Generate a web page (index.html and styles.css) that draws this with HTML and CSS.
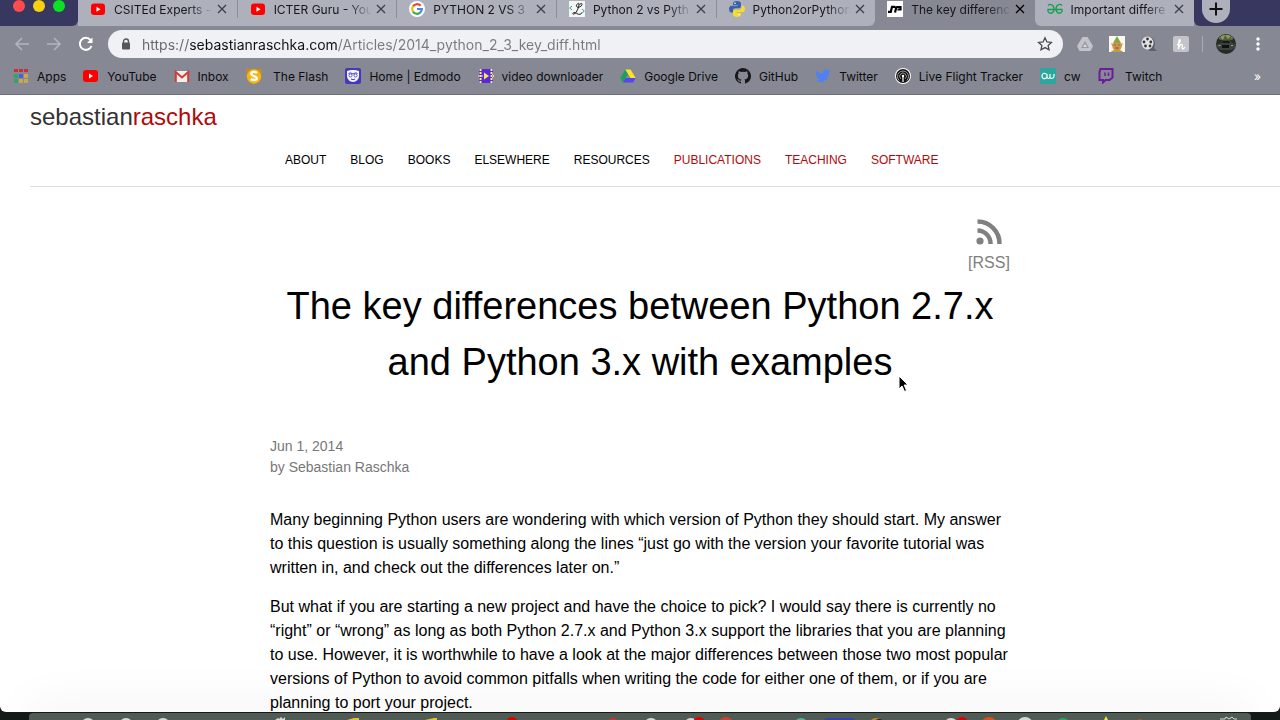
FILE: index.html
```html
<!DOCTYPE html>
<html lang="en">
    <head>
        <meta charset="utf-8">
        <title>The key differences between Python 2.7.x and Python 3.x with examples</title>
        <link rel="stylesheet" href="styles.css">
    </head>
    <body>
        <div class="browser">
            <div class="tabstrip">
                <div class="lights">
                    <button class="light close-light" aria-label="Close window"></button>
                    <button class="light min-light" aria-label="Minimize window"></button>
                    <button class="light max-light" aria-label="Zoom window"></button>
                </div>
                <div class="tab-group group-left">
                    <div class="tab">
                        <svg class="icon" viewBox="0 0 16 16"><rect x="1" y="2.500" width="14" height="11.500" rx="3" fill="#f00"/><path d="M6.500 5.800v5l4-2.500z" fill="#fff"/></svg>
                        <a class="tab-title" href="#">CSITEd Experts - </a>
                        <button class="tab-close" aria-label="Close tab"><svg viewBox="0 0 10 10"><path d="M1 1l8 8M9 1L1 9"/></svg></button>
                    </div>
                    <div class="tab">
                        <svg class="icon" viewBox="0 0 16 16"><rect x="1" y="2.500" width="14" height="11.500" rx="3" fill="#f00"/><path d="M6.500 5.800v5l4-2.500z" fill="#fff"/></svg>
                        <a class="tab-title" href="#">ICTER Guru - You</a>
                        <button class="tab-close" aria-label="Close tab"><svg viewBox="0 0 10 10"><path d="M1 1l8 8M9 1L1 9"/></svg></button>
                    </div>
                    <div class="tab">
                        <svg class="icon" viewBox="0 0 16 16"><circle cx="8" cy="8" r="8" fill="#fff"/><g fill="none" stroke-width="2.2"><path d="M4 5.400A4.800 4.800 0 0 1 11.600 4.800" stroke="#ea4335"/><path d="M4 10.600a4.800 4.800 0 0 1 0-5.200" stroke="#fbbc05"/><path d="M11.200 11.600A4.800 4.800 0 0 1 4 10.600" stroke="#34a853"/><path d="M8 8h4.800a4.800 4.800 0 0 1-1.600 3.600" stroke="#4285f4"/></g></svg>
                        <a class="tab-title" href="#">PYTHON 2 VS 3</a>
                        <button class="tab-close" aria-label="Close tab"><svg viewBox="0 0 10 10"><path d="M1 1l8 8M9 1L1 9"/></svg></button>
                    </div>
                    <div class="tab">
                        <svg class="icon" viewBox="0 0 16 16"><path d="M0 0h16v16H0z" fill="#f4f6f6"/><path d="M10.500 4c.8-2 3-2 2.500-.2-.5 1.700-3.500 3.200-5 2.200C6 4.500 9.500 1 10 2.800c.3 2-2 8.700-4.500 10.200-1.500.8-2.500-.6-1-1.300 2-1 4 2.300 6.500 1.600 1.500-.4 2-1.300 2-2" fill="none" stroke="#222"/><path d="M3 5L.7 7 3 9M13 8l2.300 2-2.300 2" fill="none" stroke="#26a77f"/></svg>
                        <a class="tab-title" href="#">Python 2 vs Pyth</a>
                        <button class="tab-close" aria-label="Close tab"><svg viewBox="0 0 10 10"><path d="M1 1l8 8M9 1L1 9"/></svg></button>
                    </div>
                    <div class="tab">
                        <svg class="icon" viewBox="0 0 16 16"><path d="M8 0C5 0 4 1 4 2.500V4h4.500v.7H2.500C1 4.700 0 6 0 8s1 3.500 2.300 3.500H4v-2C4 8 5 7.300 6.300 7.300h3.500c1.300 0 2.200-1 2.200-2.300V2.500C12 1 10.500 0 8 0z" fill="#3a62a8"/><path d="M8 16c3 0 4-1 4-2.500V12H7.500v-.7h6C15 11.300 16 10 16 8s-1-3.500-2.300-3.500H12.500v2c0 1.500-1 2.300-2.500 2.300H6.500C5 8.800 4 9.700 4 11v2.500C4 15 5.500 16 8 16z" fill="#f7dc28"/><circle cx="6" cy="2.200" r=".8" fill="#fff"/><circle cx="10" cy="13.800" r=".8" fill="#fff"/></svg>
                        <a class="tab-title" href="#">Python2orPython</a>
                        <button class="tab-close" aria-label="Close tab"><svg viewBox="0 0 10 10"><path d="M1 1l8 8M9 1L1 9"/></svg></button>
                    </div>
                </div>
                <div class="tab-group group-active">
                    <div class="tab active">
                        <svg class="icon" viewBox="0 0 16 16"><path d="M0 0h16v16H0z" fill="#fff"/><path d="M1 10.800h2.800L5 5.800h3.200M8 11.500l1.500-6M9.500 6h4v2.500H10.500" fill="none" stroke="#000" stroke-width="2.200"/></svg>
                        <a class="tab-title" href="#">The key differenc</a>
                        <button class="tab-close" aria-label="Close tab"><svg viewBox="0 0 10 10"><path d="M1 1l8 8M9 1L1 9"/></svg></button>
                    </div>
                </div>
                <div class="tab-group group-right">
                    <div class="tab">
                        <svg class="icon" viewBox="0 0 16 16"><path d="M1 4.500C3 2.500 7 3.500 7 8s-4.500 5.500-6 2.500V8.500h14v2c-1.500 3-6 2-6-2.500s4-5.500 6-3.500" fill="none" stroke="#16a052" stroke-width="1.300"/></svg>
                        <a class="tab-title" href="#">Important differe</a>
                        <button class="tab-close" aria-label="Close tab"><svg viewBox="0 0 10 10"><path d="M1 1l8 8M9 1L1 9"/></svg></button>
                    </div>
                </div>
                <button class="new-tab" aria-label="New tab"><svg viewBox="0 0 14 14"><path d="M7 .5v13M.5 7h13"/></svg></button>
            </div>

            <div class="toolbar">
                <button class="tool dim" aria-label="Back"><svg viewBox="0 0 16 16"><path d="M15 8H2M8 2L2 8l6 6"/></svg></button>
                <button class="tool dim" aria-label="Forward"><svg viewBox="0 0 16 16"><path d="M1 8h13M8 2l6 6-6 6"/></svg></button>
                <button class="tool" aria-label="Reload"><svg viewBox="0 0 16 16"><path d="M13.500 10A6 6 0 1 1 12.500 4"/><path d="M14.500 1.500v5.500H9z" fill="#fff" stroke="none"/></svg></button>
                <div class="omnibox">
                    <svg class="lock" viewBox="0 0 10 12"><path d="M2.500 5V3.500a2.500 2.500 0 0 1 5 0V5" fill="none" stroke="#55575c" stroke-width="1.400"/><rect x="1" y="4.500" width="8" height="7" rx="1" fill="#55575c"/></svg>
                    <input class="url" type="text" aria-label="Address" value="https://sebastianraschka.com/Articles/2014_python_2_3_key_diff.html">
                    <button class="star" aria-label="Bookmark this page"><svg viewBox="0 0 16 16"><path d="M8 1.800l1.900 4.100 4.500.5-3.300 3 .9 4.400L8 11.600l-4 2.200.9-4.400-3.300-3 4.500-.5z"/></svg></button>
                </div>
                <div class="extensions">
                    <button class="ext" aria-label="Drive"><svg viewBox="0 0 16 16"><path d="M5.500 1h5L16 10l-2.500 5h-11L0 10z" fill="#c3c4c9"/><path d="M8 5l-4 7h8z" fill="#999ba3"/><path d="M8 8l-2 3h4z" fill="#dcdde0"/></svg></button>
                    <button class="ext" aria-label="Elf"><svg viewBox="0 0 16 16"><path d="M0 0h16v16H0z" fill="#faf8ee"/><path d="M2 16c1-3 11-3 12 0z" fill="#b7a23e"/><path d="M2 7l2 1c1-3 7-3 8 0l2-1-1.500 4C12 16 4 16 3.500 11z" fill="#cf924f"/><path d="M8 0L3.500 8c2-2 7-2 9 0z" fill="#7fa843"/><path d="M5.500 9h1M9.500 9h1M6.500 12h3" stroke="#704727"/></svg></button>
                    <button class="ext" aria-label="Film reel"><svg viewBox="0 0 16 16"><path d="M6 1h3c5 1 6 7 4 11l3 3H8z" fill="#606168"/><ellipse cx="6.500" cy="7" rx="6" ry="6.500" fill="#e3e3e6"/><g fill="#37383d"><circle cx="6.500" cy="3" r="1.400"/><circle cx="3" cy="6" r="1.400"/><circle cx="9.800" cy="6" r="1.400"/><circle cx="4.500" cy="10" r="1.400"/><circle cx="9" cy="10" r="1.400"/></g></svg></button>
                    <button class="ext" aria-label="Honey"><svg viewBox="0 0 16 16"><rect width="16" height="16" rx="2" fill="#c3c4c9"/><path d="M4 9c3-1 4-5 2.500-5.500C5 4 6 10 5.500 13c.5-3 2-5 3.500-4.500 1.500 1-1 4 .5 4.500 1 0 2-1 2.500-2" fill="none" stroke="#fff" stroke-width="1.300"/></svg></button>
                </div>
                <button class="avatar" aria-label="Profile"><svg viewBox="0 0 20 20"><circle cx="10" cy="10" r="10" fill="#262b23"/><path d="M3 4C6-.5 14-.5 17 4l-1 2H4z" fill="#8d9a5c"/><path d="M4 3l3 3 2-5 3 4 3-3 1 4H4z" fill="#53613a"/><path d="M1 10l4-1 2-3h7l2 3 3 1v4l-3 2H4l-3-3z" fill="#3c433e"/><path d="M7 7h6l1 2H6z" fill="#171a1a"/><path d="M2.500 11h2v1h-2zM15 11h2v1h-2z" fill="#9b9d94"/><path d="M6 11h7v3H6z" fill="#101212"/></svg></button>
                <button class="more" aria-label="Menu"><svg viewBox="0 0 4 14"><circle cx="2" cy="2" r="1.700"/><circle cx="2" cy="7" r="1.700"/><circle cx="2" cy="12" r="1.700"/></svg></button>
            </div>

            <div class="bookmarks">
                <a href="#"><svg class="icon" viewBox="0 0 16 16"><path d="M1 1h4v3H1zM6 1h4v3H6zM11 1h4v3h-4z" fill="#c92f36"/><path d="M1 6h4v4H1zM1 11h4v4H1z" fill="#35a366"/><path d="M6 6h4v4H6z" fill="#4a5fd8"/><path d="M11 6h4v4h-4zM6 11h4v4H6zM11 11h4v4h-4z" fill="#c9a750"/><path d="M5.500 0v16M10.500 0v16M0 5h16M0 10.500h16" stroke="#868893"/></svg>Apps</a>
                <a href="#"><svg class="icon" viewBox="0 0 16 16"><rect x="0" y="2" width="15" height="12" rx="3" fill="#f00"/><path d="M6 5.500v5L10 8z" fill="#fff"/></svg>YouTube</a>
                <a href="#"><svg class="icon" viewBox="0 0 16 16"><path d="M1 3h14v11H1z" fill="#f3eeee"/><path d="M1.800 14V4L8 9.500 14.200 4v10" fill="none" stroke="#d23c32" stroke-width="2"/></svg>Inbox</a>
                <a href="#"><svg class="icon" viewBox="0 0 16 16"><path d="M0 1h16l-1 8a7 7 0 0 1-14 0z" fill="#c98b17"/><circle cx="8" cy="8.500" r="7.200" fill="#f5b615"/><path d="M11 5C9 3 5 3.500 5.300 6c.2 2.300 5.700 1.800 5.400 4.500-.3 2-4 2-5.900.5" fill="none" stroke="#fff" stroke-width="2.400"/></svg><span>&nbsp;The Flash</span></a>
                <a href="#"><svg class="icon" viewBox="0 0 16 16"><rect width="16" height="16" rx="2" fill="#4637bd"/><path d="M2 3l4-1h4l4 1v5c0 3-3 6-6 6s-6-3-6-6z" fill="#f5f5fb"/><path d="M3.500 5.500q2-1.500 4.500.5 2.500-2 4.500-.5M6 11q2 1.500 4 0" stroke="#4637bd" fill="none"/><circle cx="5.500" cy="7.500" r="1.500" fill="#fff" stroke="#4637bd" stroke-width=".8"/><circle cx="10.500" cy="7.500" r="1.500" fill="#fff" stroke="#4637bd" stroke-width=".8"/></svg>Home | Edmodo</a>
                <a href="#"><svg class="icon" viewBox="0 0 16 16"><path d="M1 1h14v14H1z" fill="#5a28d8"/><path d="M2.500 1v14M13.500 1v14" stroke="#f5ee86" stroke-width="2" stroke-dasharray="2 1"/><path d="M6 4.500v7l5-3.500z" fill="#f2e95c"/><path d="M0 8h5M14 6l2 2-2 2" stroke="#f2e95c" fill="none"/></svg>video downloader</a>
                <a href="#"><svg class="icon" viewBox="0 0 16 16"><path d="M5.300 1.500L8 6l-5 8.500L.3 10z" fill="#16a25b"/><path d="M5.300 1.500h5.200L15.700 10h-5.200z" fill="#fae42b"/><path d="M5.700 10h10L13 14.500H3z" fill="#5545ea"/></svg>Google Drive</a>
                <a href="#"><svg class="icon" viewBox="0 0 16 16"><path d="M8 0a8 8 0 0 0-2.500 15.600c.4.100.5-.2.500-.4v-1.500c-2.200.5-2.700-1-2.700-1-.4-.9-.9-1.200-.9-1.200-.7-.5.100-.5.100-.5.800.1 1.200.8 1.200.8.700 1.300 1.900.9 2.300.7.100-.5.300-.9.500-1.100-1.800-.2-3.600-.9-3.600-4 0-.9.300-1.600.8-2.100-.1-.2-.4-1 .1-2.100 0 0 .7-.2 2.200.8a7.500 7.500 0 0 1 4 0c1.500-1 2.200-.8 2.200-.8.500 1.100.2 1.900.1 2.100.5.600.8 1.300.8 2.100 0 3.100-1.900 3.700-3.700 3.900.3.300.6.800.6 1.500v2.400c0 .200.100.500.500.400A8 8 0 0 0 8 0z" fill="#17181b"/></svg>GitHub</a>
                <a href="#"><svg class="icon" viewBox="0 0 16 16"><path d="M15.500 3.500l-1.600 1.400c.2 5-3.900 9.100-8.900 9.100-1.700 0-3.200-.4-4.500-1.300 1.700.1 3.200-.3 4.400-1.300-1.400-.1-2.500-1-2.900-2.200h1.300C1.800 8.700.8 7.500.8 6l1.400.4C.9 5.400.4 3.700 1.300 2.200 2.900 4.200 5.200 5.400 7.900 5.500 7.400 3.300 9 1.500 11 1.500c1 0 1.800.4 2.400 1l2-.8-1.300 1.700z" fill="#5380f0"/></svg>Twitter</a>
                <a href="#"><svg class="icon" viewBox="0 0 16 16"><circle cx="8" cy="8" r="8" fill="#fff"/><circle cx="8" cy="8" r="7" fill="#121212"/><g fill="none" stroke="#bbb" stroke-width=".8"><path d="M4.200 12.500a5.500 5.500 0 1 1 7.600 0M5.700 10.700a3.300 3.300 0 1 1 4.600 0"/></g><circle cx="8" cy="8" r="1.200" fill="#fff"/><path d="M8 8v6" stroke="#fff" stroke-width="1.200"/></svg>Live Flight Tracker</a>
                <a href="#"><svg class="icon" viewBox="0 0 16 16"><path d="M0 0h16v16H0z" fill="#2ba79e"/><path d="M6.500 6C4 4.500 2 5.500 2 8s2 3 3.500 2.500L7 9V6v3c0 2 3 2 3 0V6v3c0 2 3.500 2 4-.5V6" fill="none" stroke="#fff" stroke-width="1.200"/></svg>cw</a>
                <a href="#"><svg class="icon" viewBox="0 0 16 16"><path d="M2.500 1h12v8.500L11.500 12h-4L5 14.500V12H1.500V4z" fill="none" stroke="#6c1b9c" stroke-width="2"/><path d="M7 4.500v3.500M10.500 4.500v3.500" stroke="#6c1b9c" stroke-width="1.500"/></svg><span>&nbsp;Twitch</span></a>
                <button class="overflow" aria-label="More bookmarks">»</button>
            </div>

            <div class="page">
                <header class="site-header">
                    <a class="logo" href="#">sebastian<span>raschka</span></a>
                    <nav class="site-nav">
                        <a href="#">ABOUT</a>
                        <a href="#">BLOG</a>
                        <a href="#">BOOKS</a>
                        <a href="#">ELSEWHERE</a>
                        <a href="#">RESOURCES</a>
                        <a class="red" href="#">PUBLICATIONS</a>
                        <a class="red" href="#">TEACHING</a>
                        <a class="red" href="#">SOFTWARE</a>
                    </nav>
                </header>
                <main class="post">
                    <a class="rss" href="#">
                        <svg viewBox="0 0 26 26"><circle cx="4" cy="22" r="3.600"/><path d="M1.500 11.500A13 13 0 0 1 14.500 25M1.500 2.500A22 22 0 0 1 23.500 25"/></svg>
                        [RSS]
                    </a>
                    <h1>The key differences between Python 2.7.x and Python 3.x with examples</h1>
                    <div class="meta">
                        <div>Jun 1, 2014</div>
                        <div>by Sebastian Raschka</div>
                    </div>
                    <p>Many beginning Python users are wondering with which version of Python they should start. My answer to this question is usually something along the lines “just go with the version your favorite tutorial was written in, and check out the differences later on.”</p>
                    <p>But what if you are starting a new project and have the choice to pick? I would say there is currently no “right” or “wrong” as long as both Python 2.7.x and Python 3.x support the libraries that you are planning to use. However, it is worthwhile to have a look at the major differences between those two most popular versions of Python to avoid common pitfalls when writing the code for either one of them, or if you are planning to port your project.</p>
                </main>
            </div>
        </div>

        <div class="dock">
            <svg viewBox="0 0 1222 7" preserveAspectRatio="none">
                <g fill="#d5dad7"><circle cx="59" cy="12" r="7"/><circle cx="97" cy="12" r="7"/><circle cx="134" cy="12" r="7"/><circle cx="622" cy="12" r="7"/><circle cx="662" cy="12" r="7"/><circle cx="922" cy="12" r="7"/><circle cx="996" cy="12" r="8"/></g>
                <path d="M246 7l3-2 1 1 2-2 2 2 2-2v3z" fill="#d8d8d8"/>
                <path d="M318 7l7-2h5v2zM396 7l9-2h3v2z" fill="#e0c52b"/>
                <circle cx="483" cy="10" r="6" fill="#e00000"/>
                <circle cx="584" cy="12" r="7" fill="#c83434"/>
                <circle cx="670" cy="10" r="6" fill="#e00000"/>
                <circle cx="697" cy="12" r="8" fill="#c9432f"/>
                <circle cx="772" cy="12" r="7" fill="#4fb59a"/>
                <path d="M795 7l3-2h26l2 2z" fill="#3642ae"/>
                <circle cx="847" cy="12" r="7" fill="#c58a26"/>
                <circle cx="850" cy="12" r="6" fill="#26241e"/>
                <circle cx="933" cy="10" r="6" fill="#e00000"/>
                <circle cx="960" cy="12" r="8" fill="#d8501b"/>
                <circle cx="1034" cy="12" r="7" fill="#29a859"/>
                <path d="M1077 3l-2 4h4z" fill="#f1ea35"/>
                <circle cx="1111" cy="12" r="6" fill="#b5502c"/>
                <path d="M1191 6h5l1-2 3 2 3-2 2 2h3" fill="none" stroke="#d6d9d8"/>
            </svg>
        </div>

        <svg class="cursor" viewBox="0 0 12 18"><path d="M1 1v13l3-3 2.500 5.500 2-1L6.200 10H10z" fill="#000" stroke="#fff"/></svg>
    </body>
</html>
```
FILE: styles.css
```css
*{
    box-sizing: border-box;
}
body{
    margin: 0;
    height: 100vh;
    display: flex;
    flex-direction: column;
    overflow: hidden;
    position: relative;
    background-color: #141b18;
    font-family: "Liberation Sans", Arial, sans-serif;
}
a{
    color: inherit;
    text-decoration: none;
}
button{
    margin: 0;
    padding: 0;
    border: none;
    background: none;
    font: inherit;
    color: inherit;
    display: flex;
    align-items: center;
    justify-content: center;
    flex-shrink: 0;
}
.browser{
    flex: 1;
    min-height: 0;
    display: flex;
    flex-direction: column;
    overflow: hidden;
    border-radius: 0 0 6px 6px;
    background-color: #fff;
}
.icon{
    width: 16px;
    height: 16px;
    flex-shrink: 0;
}

/* tabs */
.tabstrip{
    height: 26px;
    flex-shrink: 0;
    display: flex;
    background-color: #868893;
    font-family: Inter, Roboto, sans-serif;
    font-size: 12px;
    color: #15161a;
}
.lights{
    width: 78px;
    flex-shrink: 0;
    display: flex;
    gap: 8px;
    padding: 0 0 0 13px;
    background-color: #38375f;
    border-radius: 0 0 6px 0;
}
.light{
    width: 12px;
    height: 12px;
    border-radius: 50%;
}
.close-light{
    background-color: #fc4c50;
}
.min-light{
    background-color: #f8d010;
}
.max-light{
    background-color: #0be025;
}
.tab-group{
    display: flex;
    flex: 1;
    min-width: 0;
    background-color: #aeb0bc;
}
.group-left{
    flex: 5;
    border-radius: 0 0 6px 0;
}
.group-active{
    background-color: #868893;
}
.group-right{
    border-radius: 0 0 0 6px;
}
.tab{
    flex: 1;
    min-width: 0;
    height: 18px;
    display: flex;
    align-items: center;
    padding: 0 10px 0 12px;
    border-right: 1px solid #8b8d98;
}
.tab:last-child{
    border-right: none;
}
.tab-title{
    flex: 1;
    min-width: 0;
    margin: 0 4px 0 8px;
    overflow: hidden;
    white-space: nowrap;
    mask-image: linear-gradient(to right, #000 calc(100% - 24px), transparent);
}
.tab-close{
    width: 10px;
    height: 10px;
}
.tab-close svg{
    width: 10px;
    height: 10px;
    fill: none;
    stroke: #3d3f47;
    stroke-width: 1.3;
}
.active .tab-close svg{
    stroke: #000;
}
.new-tab{
    width: 86px;
    background-color: #38375f;
    border-radius: 0 0 0 6px;
    justify-content: flex-start;
    align-items: flex-start;
    padding-left: 8px;
}
.new-tab svg{
    width: 28px;
    height: 23px;
    padding: 2px 7px 7px;
    border-radius: 0 0 14px 14px;
    background-color: #aeb0bc;
    fill: none;
    stroke: #111;
    stroke-width: 2;
}

/* toolbar */
.toolbar{
    height: 36px;
    flex-shrink: 0;
    display: flex;
    align-items: center;
    padding: 0 14px;
    background-color: #868893;
}
.tool{
    width: 16px;
    margin-right: 16px;
}
.tool:nth-child(3){
    margin-right: 14px;
}
.tool svg{
    width: 16px;
    height: 16px;
    fill: none;
    stroke: #fff;
    stroke-width: 2;
}
.dim svg{
    stroke: #b4b6be;
    stroke-width: 1.5;
}
.omnibox{
    flex: 1;
    height: 28px;
    display: flex;
    align-items: center;
    padding: 0 10px 0 13px;
    border-radius: 14px;
    background-color: #eff1f5;
}
.lock{
    width: 10px;
    height: 12px;
    flex-shrink: 0;
}
.url{
    flex: 1;
    min-width: 0;
    margin-left: 11px;
    padding: 0;
    border: none;
    outline: none;
    font-family: Inter, Roboto, sans-serif;
    font-size: 14px;
    color: transparent;
    background: linear-gradient(to right, #63656b 48px, #111 48px, #111 196px, #77797f 196px);
    -webkit-background-clip: text;
    background-clip: text;
}
.star svg{
    width: 16px;
    height: 16px;
    fill: none;
    stroke: #484a50;
    stroke-width: 1.3;
}
.extensions{
    display: flex;
    gap: 16px;
    padding: 0 13px 0 14px;
    border-right: 1px solid #a9abb3;
}
.ext svg{
    width: 16px;
    height: 16px;
}
.avatar{
    margin: 0 20px 0 13px;
}
.avatar svg{
    width: 20px;
    height: 20px;
}
.more{
    margin-right: 6px;
}
.more svg{
    width: 4px;
    height: 14px;
    fill: #fff;
}

/* bookmarks */
.bookmarks{
    height: 33px;
    flex-shrink: 0;
    display: flex;
    align-items: center;
    gap: 17px;
    padding: 0 19px 4px 13px;
    background-color: #868893;
    border-bottom: 1px solid #6b6d77;
    font-family: Inter, Roboto, sans-serif;
    font-size: 12px;
    color: #0c0c0f;
}
.bookmarks a{
    display: flex;
    align-items: center;
    gap: 8px;
    white-space: nowrap;
}
.overflow{
    margin-left: auto;
    color: #fff;
}

/* page */
.page{
    flex: 1;
    min-height: 0;
    overflow: hidden;
    color: #000;
}
.site-header{
    margin-left: 30px;
    padding: 8px 0 16px;
    border-bottom: 1px solid #ddd;
}
.logo{
    display: block;
    font-size: 24px;
    line-height: 28px;
    color: #333;
}
.logo span{
    color: #b00a0c;
}
.site-nav{
    display: flex;
    gap: 24px;
    max-width: 740px;
    margin: 19px auto 0;
    font-size: 12px;
    line-height: 20px;
}
.red{
    color: #b00a0c;
}
.post{
    max-width: 740px;
    margin: 0 auto;
    padding-top: 32px;
}
.rss{
    width: 42px;
    margin-left: auto;
    display: flex;
    flex-direction: column;
    align-items: center;
    gap: 6px;
    font-size: 16px;
    line-height: 24px;
    color: #808080;
}
.rss svg{
    width: 26px;
    height: 26px;
    fill: #808080;
}
.rss path{
    fill: none;
    stroke: #808080;
    stroke-width: 4.5;
}
h1{
    margin: 3px 0 46px;
    text-align: center;
    font-size: 38px;
    font-weight: normal;
    line-height: 56px;
}
.meta{
    margin-bottom: 30px;
    font-size: 14px;
    line-height: 21px;
    color: #777;
}
p{
    margin: 0 0 15px;
    font-size: 16px;
    line-height: 24px;
}

/* dock under the window */
.dock{
    height: 7px;
    flex-shrink: 0;
    margin: 1px 29px 0;
    border-radius: 4px 4px 0 0;
    background-color: #505b55;
    box-shadow: 0 0 48px rgba(0, 0, 0, 0.2);
}
.dock svg{
    display: block;
    width: 100%;
    height: 7px;
}
.cursor{
    position: absolute;
    left: calc(50% + 258px);
    top: 375px;
    width: 12px;
    height: 18px;
}
```
